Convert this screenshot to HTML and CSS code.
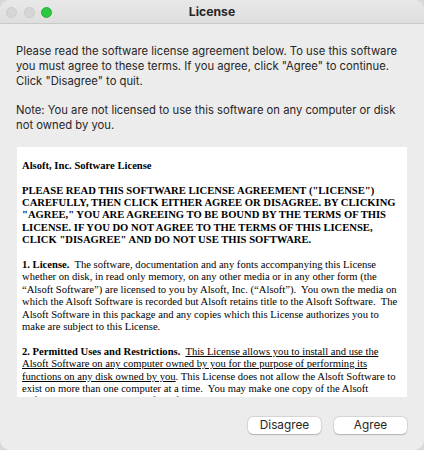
FILE: index.html
```html
<!DOCTYPE html>
<html>
<head>
<meta charset="utf-8">
<link rel="stylesheet" href="styles.css">
</head>
<body>
<div class="window">
  <div class="titlebar">
    <div class="lights">
      <span class="light light-off"></span>
      <span class="light light-off"></span>
      <span class="light light-green"></span>
    </div>
    <div class="title">License</div>
    <div></div>
  </div>
  <div class="content">
    <p class="intro">Please read the software license agreement below. To use this software<br>you must agree to these terms. If you agree, click "Agree" to continue.<br>Click "Disagree" to quit.</p>
    <p class="intro">Note: You are not licensed to use this software on any computer or disk<br>not owned by you.</p>
    <div class="license">
      <p class="b">Alsoft, Inc. Software License</p>
      <p class="b">PLEASE READ THIS SOFTWARE LICENSE AGREEMENT ("LICENSE")<br>CAREFULLY, THEN CLICK EITHER AGREE OR DISAGREE. BY CLICKING<br>"AGREE," YOU ARE AGREEING TO BE BOUND BY THE TERMS OF THIS<br>LICENSE. IF YOU DO NOT AGREE TO THE TERMS OF THIS LICENSE,<br>CLICK "DISAGREE" AND DO NOT USE THIS SOFTWARE.</p>
      <p><b>1. License.</b>&nbsp; The software, documentation and any fonts accompanying this License<br>whether on disk, in read only memory, on any other media or in any other form (the<br>“Alsoft Software”) are licensed to you by Alsoft, Inc. (“Alsoft”).&nbsp; You own the media on<br>which the Alsoft Software is recorded but Alsoft retains title to the Alsoft Software.&nbsp; The<br>Alsoft Software in this package and any copies which this License authorizes you to<br>make are subject to this License.</p>
      <p><b>2. Permitted Uses and Restrictions.</b>&nbsp; <u>This License allows you to install and use the<br>Alsoft Software on any computer owned by you for the purpose of performing its<br>functions on any disk owned by you</u>. This License does not allow the Alsoft Software to<br>exist on more than one computer at a time.&nbsp; You may make one copy of the Alsoft<br>Software in machine-readable form for backup purposes only. The backup copy must</p>
    </div>
    <div class="buttons">
      <button class="btn">Disagree</button>
      <button class="btn">Agree</button>
    </div>
  </div>
</div>
</body>
</html>
```

FILE: styles.css
```css
html, body {
  margin: 0;
  padding: 0;
  background: #d9d6dc;
}
.window {
  width: 424px;
  height: 450px;
  background: #ececec;
  border-radius: 10px;
  overflow: hidden;
  display: flex;
  flex-direction: column;
  font-family: "Inter", "Liberation Sans", sans-serif;
  color: #262626;
}
.titlebar {
  height: 24px;
  box-sizing: border-box;
  border-bottom: 1px solid #c9c9c9;
  background: linear-gradient(#e8e8e8, #dedede);
  display: grid;
  grid-template-columns: 1fr auto 1fr;
  align-items: center;
}
.lights {
  display: flex;
  gap: 6.6px;
  padding-left: 6px;
  padding-top: 2px;
}
.light {
  width: 11px;
  height: 11px;
  border-radius: 50%;
  box-sizing: border-box;
}
.light-off {
  background: #d6d6d6;
  border: 1px solid #cacaca;
}
.light-green {
  background: #2bc840;
  border: 1px solid #25b43a;
}
.title {
  font-size: 12.2px;
  font-weight: 700;
  color: #262626;
}
.content {
  padding: 20px 17px 0 16px;
  display: flex;
  flex-direction: column;
}
.intro {
  margin: 0 0 14.8px 0;
  font-size: 11.25px;
  line-height: 14.8px;
  white-space: nowrap;
}
.intro + .intro {
  margin-bottom: 0;
}
.license {
  margin: 14px 0 0 1px;
  height: 250px;
  background: #ffffff;
  overflow: hidden;
  box-sizing: border-box;
  padding: 13px 0 0 5px;
  font-family: "Liberation Serif", serif;
  font-size: 10.6px;
  line-height: 12.4px;
  color: #000;
}
.license p {
  margin: 0 0 12.4px 0;
  white-space: nowrap;
}
.license .b {
  font-weight: 700;
}
.buttons {
  display: flex;
  justify-content: flex-end;
  gap: 13px;
  margin-top: 20px;
}
.btn {
  width: 73px;
  height: 17px;
  padding: 0;
  border: none;
  border-radius: 5px;
  background: #ffffff;
  box-shadow: 0 0 0 0.5px rgba(0,0,0,0.12), 0 0.5px 1.5px rgba(0,0,0,0.2);
  font-family: "Inter", "Liberation Sans", sans-serif;
  font-size: 11.8px;
  color: #262626;
}
```
